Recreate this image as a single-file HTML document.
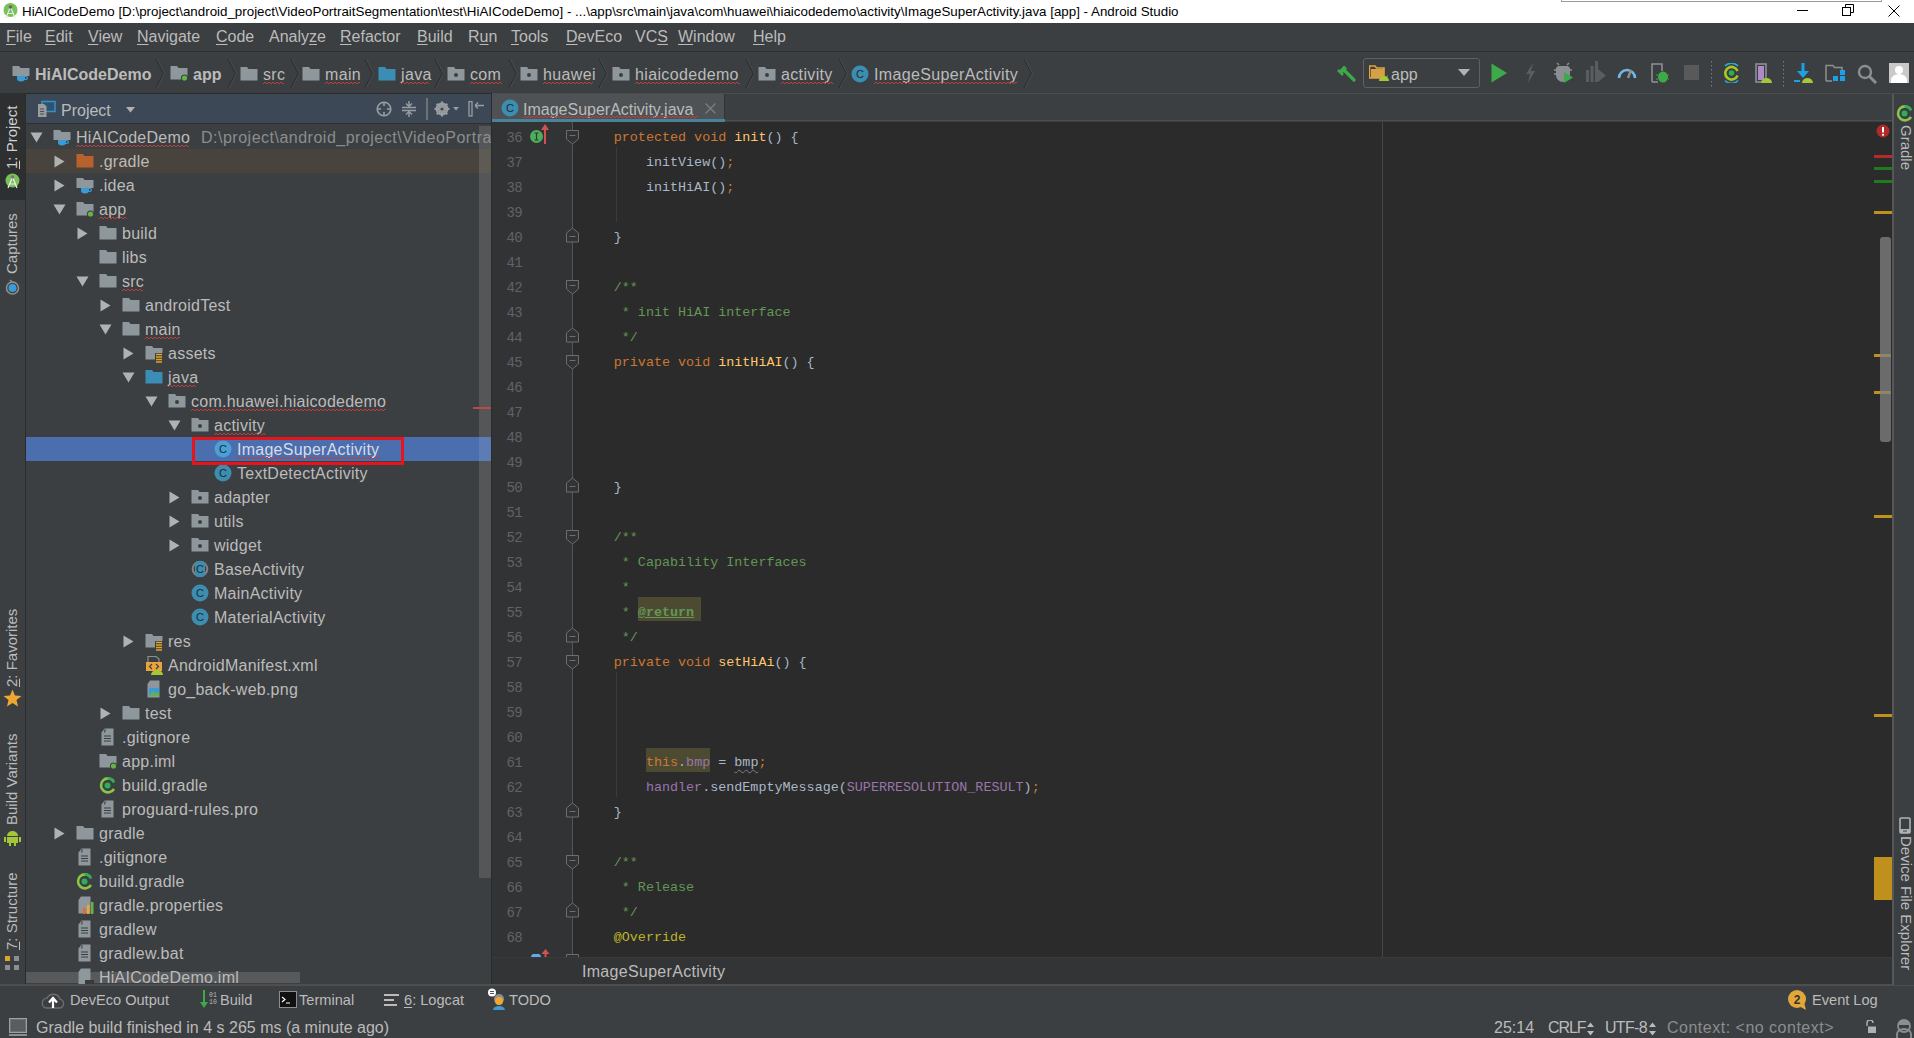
<!DOCTYPE html><html><head><meta charset="utf-8"><style>
*{margin:0;padding:0;box-sizing:border-box}
html,body{width:1914px;height:1038px;overflow:hidden;background:#3C3F41;font-family:"Liberation Sans", sans-serif}
div{position:absolute}
.t{white-space:pre;line-height:1}
.m{white-space:pre;line-height:1;font-family:"Liberation Mono", monospace}
u{text-decoration:underline;text-underline-offset:2px;text-decoration-thickness:1px}
</style></head><body>
<div style="left:0px;top:0px;width:1914px;height:23px;background:#FFFFFF;"></div>
<svg style="position:absolute;left:2px;top:2px;" width="17" height="17" viewBox="0 0 17 17"><circle cx="8.5" cy="8" r="7" fill="#78C257"/><path d="M8.5 4.5 L4 16 M8.5 4.5 L13 16 M5 11.5 H12" stroke="#E8E8E8" stroke-width="1.2" fill="none"/><circle cx="8.5" cy="5" r="1.8" fill="#666"/></svg>
<div class="t" style="left:22px;top:5px;font-size:13.35px;color:#000000;">HiAICodeDemo [D:\project\android_project\VideoPortraitSegmentation\test\HiAICodeDemo] - ...\app\src\main\java\com\huawei\hiaicodedemo\activity\ImageSuperActivity.java [app] - Android Studio</div>
<div style="left:1561px;top:0px;width:321px;height:2px;background:transparent;border:1px solid #9a9a9a;border-top:none"></div>
<div style="left:1797px;top:10px;width:11px;height:1px;background:#000;"></div>
<svg style="position:absolute;left:1841px;top:3px;" width="14" height="14" viewBox="0 0 14 14"><rect x="1.5" y="4.5" width="8" height="8" fill="none" stroke="#000"/><path d="M4.5 4.5 V1.5 H12.5 V9.5 H9.5" fill="none" stroke="#000"/></svg>
<svg style="position:absolute;left:1888px;top:5px;" width="12" height="12" viewBox="0 0 12 12"><path d="M0.5 0.5 L11.5 11.5 M11.5 0.5 L0.5 11.5" stroke="#000" stroke-width="1"/></svg>
<div style="left:0px;top:23px;width:1914px;height:29px;background:#3C3F41;"></div>
<div style="left:0px;top:51px;width:1914px;height:1px;background:#2E3032;"></div>
<div class="t" style="left:6px;top:29px;font-size:16px;color:#BBBBBB;"><u>F</u>ile</div>
<div class="t" style="left:45px;top:29px;font-size:16px;color:#BBBBBB;"><u>E</u>dit</div>
<div class="t" style="left:88px;top:29px;font-size:16px;color:#BBBBBB;"><u>V</u>iew</div>
<div class="t" style="left:137px;top:29px;font-size:16px;color:#BBBBBB;"><u>N</u>avigate</div>
<div class="t" style="left:216px;top:29px;font-size:16px;color:#BBBBBB;"><u>C</u>ode</div>
<div class="t" style="left:269px;top:29px;font-size:16px;color:#BBBBBB;">Analy<u>z</u>e</div>
<div class="t" style="left:340px;top:29px;font-size:16px;color:#BBBBBB;"><u>R</u>efactor</div>
<div class="t" style="left:417px;top:29px;font-size:16px;color:#BBBBBB;"><u>B</u>uild</div>
<div class="t" style="left:468px;top:29px;font-size:16px;color:#BBBBBB;">R<u>u</u>n</div>
<div class="t" style="left:511px;top:29px;font-size:16px;color:#BBBBBB;"><u>T</u>ools</div>
<div class="t" style="left:566px;top:29px;font-size:16px;color:#BBBBBB;"><u>D</u>evEco</div>
<div class="t" style="left:635px;top:29px;font-size:16px;color:#BBBBBB;">VC<u>S</u></div>
<div class="t" style="left:678px;top:29px;font-size:16px;color:#BBBBBB;"><u>W</u>indow</div>
<div class="t" style="left:753px;top:29px;font-size:16px;color:#BBBBBB;"><u>H</u>elp</div>
<div style="left:0px;top:52px;width:1914px;height:41px;background:#3C3F41;"></div>
<div style="left:0px;top:93px;width:492px;height:1px;background:#2B2B2B;"></div>
<div style="left:492px;top:93px;width:1422px;height:1px;background:#4A4C4E;"></div>
<svg style="position:absolute;left:12px;top:65px;" width="20" height="19" viewBox="0 0 20 19"><path d="M0.5 1 H7 L8.5 3 H17.5 V11 H0.5 Z" fill="#8E979C"/><path d="M5 11 h8 v2.5 a4 3 0 0 1 -8 0 Z" fill="#3A9BD6"/><path d="M12.5 11.5 h1.5 a1.4 1.4 0 0 1 0 2.8 h-1.5" stroke="#3A9BD6" stroke-width="1.2" fill="none"/></svg>
<div class="t" style="left:35px;top:67px;font-size:16px;color:#BBBBBB;font-weight:bold">HiAICodeDemo</div>
<svg style="position:absolute;left:155px;top:59px;" width="10" height="29" viewBox="0 0 10 29"><path d="M1 0 L8.5 14.5 L1 29" stroke="#2B2D2F" stroke-width="1.2" fill="none"/><path d="M2 0 L9.5 14.5 L2 29" stroke="#4F5254" stroke-width="0.8" fill="none"/></svg>
<svg style="position:absolute;left:170px;top:65px;" width="20" height="19" viewBox="0 0 20 19"><path d="M0.5 1 H7 L8.5 3 H17.5 V14.5 H0.5 Z" fill="#8E979C"/><circle cx="14.5" cy="13" r="3.6" fill="#3C3F41"/><circle cx="14.5" cy="13" r="2.6" fill="#62B543"/></svg>
<div class="t" style="left:193px;top:67px;font-size:16px;color:#BBBBBB;font-weight:bold">app</div>
<svg style="position:absolute;left:227px;top:59px;" width="10" height="29" viewBox="0 0 10 29"><path d="M1 0 L8.5 14.5 L1 29" stroke="#2B2D2F" stroke-width="1.2" fill="none"/><path d="M2 0 L9.5 14.5 L2 29" stroke="#4F5254" stroke-width="0.8" fill="none"/></svg>
<svg style="position:absolute;left:240px;top:66px;" width="20" height="19" viewBox="0 0 20 19"><path d="M0.5 1 H7 L8.5 3 H17.5 V14.5 H0.5 Z" fill="#8E979C"/></svg>
<div class="t" style="left:263px;top:67px;font-size:16px;color:#BBBBBB;letter-spacing:0.35px">src</div>
<svg style="position:absolute;left:263px;top:82px;" width="21" height="3" viewBox="0 0 21 3"><path d="M0 2 L2 0 L4 2 L6 0 L8 2 L10 0 L12 2 L14 0 L16 2 L18 0 L20 2 L22 0" stroke="#BC3F3C" stroke-width="1" fill="none"/></svg>
<svg style="position:absolute;left:290px;top:59px;" width="10" height="29" viewBox="0 0 10 29"><path d="M1 0 L8.5 14.5 L1 29" stroke="#2B2D2F" stroke-width="1.2" fill="none"/><path d="M2 0 L9.5 14.5 L2 29" stroke="#4F5254" stroke-width="0.8" fill="none"/></svg>
<svg style="position:absolute;left:302px;top:66px;" width="20" height="19" viewBox="0 0 20 19"><path d="M0.5 1 H7 L8.5 3 H17.5 V14.5 H0.5 Z" fill="#8E979C"/></svg>
<div class="t" style="left:325px;top:67px;font-size:16px;color:#BBBBBB;letter-spacing:0.35px">main</div>
<svg style="position:absolute;left:325px;top:82px;" width="35" height="3" viewBox="0 0 35 3"><path d="M0 2 L2 0 L4 2 L6 0 L8 2 L10 0 L12 2 L14 0 L16 2 L18 0 L20 2 L22 0 L24 2 L26 0 L28 2 L30 0 L32 2 L34 0 L36 2" stroke="#BC3F3C" stroke-width="1" fill="none"/></svg>
<svg style="position:absolute;left:364px;top:59px;" width="10" height="29" viewBox="0 0 10 29"><path d="M1 0 L8.5 14.5 L1 29" stroke="#2B2D2F" stroke-width="1.2" fill="none"/><path d="M2 0 L9.5 14.5 L2 29" stroke="#4F5254" stroke-width="0.8" fill="none"/></svg>
<svg style="position:absolute;left:378px;top:66px;" width="20" height="19" viewBox="0 0 20 19"><path d="M0.5 1 H7 L8.5 3 H17.5 V14.5 H0.5 Z" fill="#3C8DB5"/></svg>
<div class="t" style="left:401px;top:67px;font-size:16px;color:#BBBBBB;letter-spacing:0.35px">java</div>
<svg style="position:absolute;left:401px;top:82px;" width="28" height="3" viewBox="0 0 28 3"><path d="M0 2 L2 0 L4 2 L6 0 L8 2 L10 0 L12 2 L14 0 L16 2 L18 0 L20 2 L22 0 L24 2 L26 0 L28 2 L30 0" stroke="#BC3F3C" stroke-width="1" fill="none"/></svg>
<svg style="position:absolute;left:434px;top:59px;" width="10" height="29" viewBox="0 0 10 29"><path d="M1 0 L8.5 14.5 L1 29" stroke="#2B2D2F" stroke-width="1.2" fill="none"/><path d="M2 0 L9.5 14.5 L2 29" stroke="#4F5254" stroke-width="0.8" fill="none"/></svg>
<svg style="position:absolute;left:447px;top:66px;" width="20" height="19" viewBox="0 0 20 19"><path d="M0.5 1 H7 L8.5 3 H17.5 V14.5 H0.5 Z" fill="#8E979C"/><circle cx="9" cy="9" r="2" fill="#3C3F41"/></svg>
<div class="t" style="left:470px;top:67px;font-size:16px;color:#BBBBBB;letter-spacing:0.35px">com</div>
<svg style="position:absolute;left:470px;top:82px;" width="32" height="3" viewBox="0 0 32 3"><path d="M0 2 L2 0 L4 2 L6 0 L8 2 L10 0 L12 2 L14 0 L16 2 L18 0 L20 2 L22 0 L24 2 L26 0 L28 2 L30 0 L32 2 L34 0" stroke="#BC3F3C" stroke-width="1" fill="none"/></svg>
<svg style="position:absolute;left:508px;top:59px;" width="10" height="29" viewBox="0 0 10 29"><path d="M1 0 L8.5 14.5 L1 29" stroke="#2B2D2F" stroke-width="1.2" fill="none"/><path d="M2 0 L9.5 14.5 L2 29" stroke="#4F5254" stroke-width="0.8" fill="none"/></svg>
<svg style="position:absolute;left:520px;top:66px;" width="20" height="19" viewBox="0 0 20 19"><path d="M0.5 1 H7 L8.5 3 H17.5 V14.5 H0.5 Z" fill="#8E979C"/><circle cx="9" cy="9" r="2" fill="#3C3F41"/></svg>
<div class="t" style="left:543px;top:67px;font-size:16px;color:#BBBBBB;letter-spacing:0.35px">huawei</div>
<svg style="position:absolute;left:543px;top:82px;" width="50" height="3" viewBox="0 0 50 3"><path d="M0 2 L2 0 L4 2 L6 0 L8 2 L10 0 L12 2 L14 0 L16 2 L18 0 L20 2 L22 0 L24 2 L26 0 L28 2 L30 0 L32 2 L34 0 L36 2 L38 0 L40 2 L42 0 L44 2 L46 0 L48 2 L50 0 L52 2" stroke="#BC3F3C" stroke-width="1" fill="none"/></svg>
<svg style="position:absolute;left:598px;top:59px;" width="10" height="29" viewBox="0 0 10 29"><path d="M1 0 L8.5 14.5 L1 29" stroke="#2B2D2F" stroke-width="1.2" fill="none"/><path d="M2 0 L9.5 14.5 L2 29" stroke="#4F5254" stroke-width="0.8" fill="none"/></svg>
<svg style="position:absolute;left:612px;top:66px;" width="20" height="19" viewBox="0 0 20 19"><path d="M0.5 1 H7 L8.5 3 H17.5 V14.5 H0.5 Z" fill="#8E979C"/><circle cx="9" cy="9" r="2" fill="#3C3F41"/></svg>
<div class="t" style="left:635px;top:67px;font-size:16px;color:#BBBBBB;letter-spacing:0.35px">hiaicodedemo</div>
<svg style="position:absolute;left:635px;top:82px;" width="105" height="3" viewBox="0 0 105 3"><path d="M0 2 L2 0 L4 2 L6 0 L8 2 L10 0 L12 2 L14 0 L16 2 L18 0 L20 2 L22 0 L24 2 L26 0 L28 2 L30 0 L32 2 L34 0 L36 2 L38 0 L40 2 L42 0 L44 2 L46 0 L48 2 L50 0 L52 2 L54 0 L56 2 L58 0 L60 2 L62 0 L64 2 L66 0 L68 2 L70 0 L72 2 L74 0 L76 2 L78 0 L80 2 L82 0 L84 2 L86 0 L88 2 L90 0 L92 2 L94 0 L96 2 L98 0 L100 2 L102 0 L104 2 L106 0" stroke="#BC3F3C" stroke-width="1" fill="none"/></svg>
<svg style="position:absolute;left:745px;top:59px;" width="10" height="29" viewBox="0 0 10 29"><path d="M1 0 L8.5 14.5 L1 29" stroke="#2B2D2F" stroke-width="1.2" fill="none"/><path d="M2 0 L9.5 14.5 L2 29" stroke="#4F5254" stroke-width="0.8" fill="none"/></svg>
<svg style="position:absolute;left:758px;top:66px;" width="20" height="19" viewBox="0 0 20 19"><path d="M0.5 1 H7 L8.5 3 H17.5 V14.5 H0.5 Z" fill="#8E979C"/><circle cx="9" cy="9" r="2" fill="#3C3F41"/></svg>
<div class="t" style="left:781px;top:67px;font-size:16px;color:#BBBBBB;letter-spacing:0.35px">activity</div>
<svg style="position:absolute;left:781px;top:82px;" width="52" height="3" viewBox="0 0 52 3"><path d="M0 2 L2 0 L4 2 L6 0 L8 2 L10 0 L12 2 L14 0 L16 2 L18 0 L20 2 L22 0 L24 2 L26 0 L28 2 L30 0 L32 2 L34 0 L36 2 L38 0 L40 2 L42 0 L44 2 L46 0 L48 2 L50 0 L52 2 L54 0" stroke="#BC3F3C" stroke-width="1" fill="none"/></svg>
<svg style="position:absolute;left:838px;top:59px;" width="10" height="29" viewBox="0 0 10 29"><path d="M1 0 L8.5 14.5 L1 29" stroke="#2B2D2F" stroke-width="1.2" fill="none"/><path d="M2 0 L9.5 14.5 L2 29" stroke="#4F5254" stroke-width="0.8" fill="none"/></svg>
<svg style="position:absolute;left:851px;top:65px;" width="18" height="18" viewBox="0 0 18 18"><circle cx="9" cy="9" r="8.5" fill="#3D8DB0"/><text x="9" y="13" text-anchor="middle" font-family="Liberation Sans" font-size="11" fill="#1D2B33">C</text></svg>
<div class="t" style="left:874px;top:67px;font-size:16px;color:#BBBBBB;letter-spacing:0.35px">ImageSuperActivity</div>
<svg style="position:absolute;left:874px;top:82px;" width="143" height="3" viewBox="0 0 143 3"><path d="M0 2 L2 0 L4 2 L6 0 L8 2 L10 0 L12 2 L14 0 L16 2 L18 0 L20 2 L22 0 L24 2 L26 0 L28 2 L30 0 L32 2 L34 0 L36 2 L38 0 L40 2 L42 0 L44 2 L46 0 L48 2 L50 0 L52 2 L54 0 L56 2 L58 0 L60 2 L62 0 L64 2 L66 0 L68 2 L70 0 L72 2 L74 0 L76 2 L78 0 L80 2 L82 0 L84 2 L86 0 L88 2 L90 0 L92 2 L94 0 L96 2 L98 0 L100 2 L102 0 L104 2 L106 0 L108 2 L110 0 L112 2 L114 0 L116 2 L118 0 L120 2 L122 0 L124 2 L126 0 L128 2 L130 0 L132 2 L134 0 L136 2 L138 0 L140 2 L142 0 L144 2" stroke="#BC3F3C" stroke-width="1" fill="none"/></svg>
<svg style="position:absolute;left:1023px;top:59px;" width="10" height="29" viewBox="0 0 10 29"><path d="M1 0 L8.5 14.5 L1 29" stroke="#2B2D2F" stroke-width="1.2" fill="none"/><path d="M2 0 L9.5 14.5 L2 29" stroke="#4F5254" stroke-width="0.8" fill="none"/></svg>
<svg style="position:absolute;left:1336px;top:63px;" width="20" height="20" viewBox="0 0 20 20"><path d="M3 8 L8 2.5 L11 5.5 L6 11 Z" fill="#3DAA4A"/><path d="M8 7 L18 17" stroke="#3DAA4A" stroke-width="3.2" stroke-linecap="round"/><path d="M2 7 L7 12" stroke="#3DAA4A" stroke-width="2.5"/></svg>
<div style="left:1363px;top:58px;width:117px;height:30px;background:#3C3F41;border:1px solid #5E6062;border-radius:3px"></div>
<svg style="position:absolute;left:1369px;top:65px;" width="22" height="17" viewBox="0 0 22 17"><path d="M0.5 1 H6 L7.5 3 H15 V13 H0.5 Z" fill="none" stroke="#E3A53E" stroke-width="1.6"/><path d="M2 4 H15 V13 H2Z" fill="#D7A047"/><path d="M10 16 a5 5 0 0 1 10 0 Z" fill="#A4C639"/><path d="M11.5 10.5 L12.5 12 M18.5 10.5 L17.5 12" stroke="#A4C639"/></svg>
<div class="t" style="left:1391px;top:67px;font-size:16px;color:#BBBBBB;">app</div>
<svg style="position:absolute;left:1458px;top:69px;" width="13" height="8" viewBox="0 0 13 8"><path d="M0 0 H12 L6 7Z" fill="#AFB1B3"/></svg>
<svg style="position:absolute;left:1491px;top:63px;" width="17" height="20" viewBox="0 0 17 20"><path d="M0.5 0.5 L16 10 L0.5 19.5Z" fill="#3DAA4A"/></svg>
<svg style="position:absolute;left:1524px;top:63px;" width="13" height="20" viewBox="0 0 13 20"><path d="M9 0 L2 11 H6 L4 20 L11 8 H7 Z" fill="#5A5D5F"/></svg>
<svg style="position:absolute;left:1554px;top:62px;" width="20" height="21" viewBox="0 0 20 21"><path d="M4 4 h10 l2 2 v7 a7 7 0 0 1 -14 0 v-7 Z" fill="#8C8F91"/><path d="M2 8 h-2 M2 12 h-2 M16 8 h2 M5 3 l-2 -2 M13 3 l2 -2" stroke="#8C8F91" stroke-width="1.5"/><path d="M10 10 L19 15.5 L10 21Z" fill="#3DAA4A"/></svg>
<svg style="position:absolute;left:1586px;top:61px;" width="20" height="22" viewBox="0 0 20 22"><rect x="0" y="9" width="3" height="12" fill="#5A5D5F"/><rect x="4.5" y="5" width="3" height="16" fill="#5A5D5F"/><rect x="9" y="0" width="3" height="21" fill="#5A5D5F"/><path d="M12 8 L20 14.5 L12 21Z" fill="#5A5D5F"/></svg>
<svg style="position:absolute;left:1617px;top:64px;" width="20" height="16" viewBox="0 0 20 16"><path d="M2 14 A8 8 0 0 1 18 14" stroke="#6FB8E8" stroke-width="2.6" fill="none"/><path d="M11 14 L14 6" stroke="#8C8F91" stroke-width="2.4"/></svg>
<svg style="position:absolute;left:1651px;top:63px;" width="18" height="20" viewBox="0 0 18 20"><path d="M1 19 V1 H11 V8" stroke="#8C8F91" stroke-width="1.6" fill="none"/><path d="M1 19 H7" stroke="#8C8F91" stroke-width="1.6"/><ellipse cx="12" cy="14" rx="5" ry="5.5" fill="#3DAA4A"/><path d="M7 12 h-2 M17 12 h2 M7 16 h-2 M17 16 h2" stroke="#3DAA4A"/></svg>
<div style="left:1684px;top:65px;width:15px;height:15px;background:#595959;"></div>
<svg style="position:absolute;left:1710px;top:61px;" width="3" height="26" viewBox="0 0 3 26"><path d="M1.5 0 V26" stroke="#7A7D7F" stroke-dasharray="1.5 2.5"/></svg>
<svg style="position:absolute;left:1722px;top:63px;" width="19" height="20" viewBox="0 0 19 20"><path d="M3 3 A9 9 0 0 1 16 3" stroke="#28A8E0" stroke-width="1.6" fill="none"/><path d="M3 17.5 A9 9 0 0 0 16 17.5" stroke="#28A8E0" stroke-width="1.6" fill="none"/><path d="M15.5 8 A6.3 6.3 0 1 0 15.5 12.5" stroke="#A5C920" stroke-width="2.6" fill="none"/><circle cx="9.5" cy="10" r="2.7" fill="#2FAE58"/></svg>
<svg style="position:absolute;left:1755px;top:63px;" width="17" height="20" viewBox="0 0 17 20"><rect x="1" y="1" width="10" height="18" fill="none" stroke="#8C8F91" stroke-width="1.6"/><rect x="3" y="3" width="6" height="14" fill="#B08AC8"/><path d="M6 20 a5.5 5 0 0 1 11 0 Z" fill="#A4C639"/></svg>
<svg style="position:absolute;left:1782px;top:61px;" width="3" height="26" viewBox="0 0 3 26"><path d="M1.5 0 V26" stroke="#7A7D7F" stroke-dasharray="1.5 2.5"/></svg>
<svg style="position:absolute;left:1794px;top:63px;" width="19" height="20" viewBox="0 0 19 20"><path d="M9 0 V12" stroke="#1E9FE6" stroke-width="3"/><path d="M3 8 L9 15 L15 8Z" fill="#1E9FE6"/><rect x="0" y="17" width="6" height="2" fill="#1E9FE6"/><path d="M8 20 a5.5 5 0 0 1 11 0 Z" fill="#A4C639"/></svg>
<svg style="position:absolute;left:1825px;top:64px;" width="21" height="18" viewBox="0 0 21 18"><path d="M1 17 V1.5 H8 L9.5 3.5 H17 V6" stroke="#8C8F91" stroke-width="1.5" fill="none"/><path d="M1 17 H7" stroke="#8C8F91" stroke-width="1.5"/><rect x="15" y="6" width="5" height="5" fill="#1E9FE6"/><rect x="8" y="12" width="5" height="5" fill="#1E9FE6"/><rect x="15" y="12" width="5" height="5" fill="#1E9FE6"/></svg>
<svg style="position:absolute;left:1857px;top:64px;" width="21" height="20" viewBox="0 0 21 20"><circle cx="8" cy="8" r="6" stroke="#8C8F91" stroke-width="2.4" fill="none"/><path d="M12.5 12.5 L19 19" stroke="#8C8F91" stroke-width="3"/></svg>
<svg style="position:absolute;left:1889px;top:63px;" width="20" height="20" viewBox="0 0 20 20"><rect width="20" height="20" fill="#C9C9C9"/><circle cx="10" cy="7" r="4" fill="#FFF"/><path d="M2 20 V17 a8 6 0 0 1 16 0 V20Z" fill="#FFF"/></svg>
<div style="left:0px;top:94px;width:25px;height:891px;background:#3C3F41;"></div>
<div style="left:0px;top:93px;width:25px;height:107px;background:#2D2F30;"></div>
<div style="left:25px;top:94px;width:1px;height:891px;background:#2B2B2B;"></div>
<div class="t" style="left:4px;top:169px;font-size:15px;color:#D0D0D0;transform-origin:0 0;transform:rotate(-90deg)"><u>1</u>: Project</div>
<div class="t" style="left:4px;top:274px;font-size:15px;color:#BBBBBB;transform-origin:0 0;transform:rotate(-90deg)">Captures</div>
<div class="t" style="left:4px;top:687px;font-size:15px;color:#BBBBBB;transform-origin:0 0;transform:rotate(-90deg)"><u>2</u>: Favorites</div>
<div class="t" style="left:4px;top:825px;font-size:15px;color:#BBBBBB;transform-origin:0 0;transform:rotate(-90deg)">Build Variants</div>
<div class="t" style="left:4px;top:950px;font-size:15px;color:#BBBBBB;transform-origin:0 0;transform:rotate(-90deg)"><u>7</u>: Structure</div>
<svg style="position:absolute;left:4px;top:172px;" width="17" height="17" viewBox="0 0 17 17"><circle cx="8.5" cy="8.5" r="7" fill="#78C257"/><path d="M8.5 5 L4 16 M8.5 5 L13 16 M5 12 H12" stroke="#F0F0F0" stroke-width="1.2" fill="none"/><circle cx="8.5" cy="5" r="1.8" fill="#777"/></svg>
<svg style="position:absolute;left:4px;top:278px;" width="17" height="17" viewBox="0 0 17 17"><circle cx="8.5" cy="10" r="6" fill="none" stroke="#8C8F91" stroke-width="1.6"/><circle cx="8.5" cy="10" r="4" fill="#3A9BD6"/><path d="M6 2 L9 5" stroke="#8C8F91" stroke-width="1.5"/></svg>
<svg style="position:absolute;left:3px;top:689px;" width="19" height="18" viewBox="0 0 19 18"><path d="M9.5 0.5 L12 6.5 L18.5 7 L13.5 11 L15 17.5 L9.5 14 L4 17.5 L5.5 11 L0.5 7 L7 6.5Z" fill="#F0A732"/></svg>
<svg style="position:absolute;left:4px;top:829px;" width="17" height="17" viewBox="0 0 17 17"><path d="M3 7 a5.5 5 0 0 1 11 0 Z" fill="#A4C639"/><rect x="3" y="8" width="11" height="6" fill="#A4C639"/><rect x="0" y="8" width="2" height="5" fill="#A4C639"/><rect x="15" y="8" width="2" height="5" fill="#A4C639"/><rect x="5" y="14" width="2" height="3" fill="#A4C639"/><rect x="10" y="14" width="2" height="3" fill="#A4C639"/></svg>
<svg style="position:absolute;left:4px;top:955px;" width="17" height="16" viewBox="0 0 17 16"><rect x="1" y="1" width="5" height="5" fill="#E0A526"/><rect x="10" y="1" width="5" height="5" fill="#8C8F91"/><rect x="1" y="10" width="5" height="5" fill="#8C8F91"/><rect x="10" y="10" width="5" height="5" fill="#8C8F91"/></svg>
<div style="left:26px;top:94px;width:465px;height:30px;background:#3D4857;"></div>
<div style="left:26px;top:123px;width:465px;height:1px;background:#2E3033;"></div>
<svg style="position:absolute;left:37px;top:100px;" width="20" height="18" viewBox="0 0 20 18"><rect x="5" y="1.5" width="13" height="10" fill="#2C5472" stroke="#3A8FC0" stroke-width="1.5"/><path d="M1 4 H7 L9.5 6.5 V17 H1Z" fill="#9A9C9E"/><path d="M3 9 h4 M3 11.5 h4 M3 14 h4" stroke="#4A4C4E" stroke-width="1.2"/></svg>
<div class="t" style="left:61px;top:103px;font-size:16px;color:#BBBBBB;">Project</div>
<svg style="position:absolute;left:126px;top:107px;" width="10" height="6" viewBox="0 0 10 6"><path d="M0 0 H9 L4.5 5.5Z" fill="#AFB1B3"/></svg>
<svg style="position:absolute;left:376px;top:101px;" width="17" height="17" viewBox="0 0 17 17"><circle cx="8" cy="8" r="6.8" stroke="#9A9DA0" stroke-width="1.6" fill="none"/><path d="M8 1 V5 M8 11 V15 M1 8 H5 M11 8 H15" stroke="#9A9DA0" stroke-width="1.6"/></svg>
<svg style="position:absolute;left:401px;top:101px;" width="16" height="17" viewBox="0 0 16 17"><path d="M1 6.5 H15 M1 9.5 H15" stroke="#9A9DA0" stroke-width="1.3"/><path d="M8 0 V5 M5 2.5 L8 5.5 L11 2.5 M8 16 V11 M5 13.5 L8 10.5 L11 13.5" stroke="#9A9DA0" stroke-width="1.4" fill="none"/></svg>
<div style="left:426px;top:98px;width:2px;height:22px;background:#6E7275;"></div>
<svg style="position:absolute;left:434px;top:101px;" width="26" height="17" viewBox="0 0 26 17"><circle cx="8" cy="8" r="5" fill="none" stroke="#9A9DA0" stroke-width="3"/><path d="M8 0.5 V15.5 M0.5 8 H15.5 M2.7 2.7 L13.3 13.3 M13.3 2.7 L2.7 13.3" stroke="#9A9DA0" stroke-width="2.2"/><circle cx="8" cy="8" r="1.6" fill="#3D4756"/><path d="M19 6 H25 L22 9.5Z" fill="#9A9DA0"/></svg>
<svg style="position:absolute;left:468px;top:101px;" width="17" height="16" viewBox="0 0 17 16"><rect x="1" y="0.5" width="3" height="14.5" fill="none" stroke="#9A9DA0" stroke-width="1.3"/><path d="M7 4.5 H16 M7 4.5 L10 1.5 M7 4.5 L10 7.5" stroke="#9A9DA0" stroke-width="1.3" fill="none"/></svg>
<div style="left:26px;top:124px;width:465px;height:861px;background:#3C3F41;"></div>
<div style="left:26px;top:149px;width:453px;height:24px;background:#48443D;"></div>
<div style="left:26px;top:437px;width:453px;height:24px;background:#4B6EAF;"></div>
<div style="left:26px;top:972px;width:274px;height:11px;background:#57595B;"></div>
<div style="left:479px;top:124px;width:12px;height:861px;background:#3C3F41;"></div>
<div style="left:479px;top:126px;width:12px;height:752px;background:#545658;"></div>
<div style="left:479px;top:437px;width:12px;height:24px;background:#5D7BB5;"></div>
<div style="left:479px;top:149px;width:12px;height:24px;background:#5E5B55;"></div>
<svg style="position:absolute;left:30px;top:132px;" width="13" height="11" viewBox="0 0 13 11"><path d="M0.5 0.5 H12.5 L6.5 10.5Z" fill="#AFB1B3"/></svg>
<svg style="position:absolute;left:53px;top:129px;" width="20" height="19" viewBox="0 0 20 19"><path d="M0.5 1 H7 L8.5 3 H17.5 V11 H0.5 Z" fill="#8E979C"/><path d="M5 11 h8 v2.5 a4 3 0 0 1 -8 0 Z" fill="#3A9BD6"/><path d="M12.5 11.5 h1.5 a1.4 1.4 0 0 1 0 2.8 h-1.5" stroke="#3A9BD6" stroke-width="1.2" fill="none"/></svg>
<div class="t" style="left:76px;top:130px;font-size:16px;color:#BBBBBB;letter-spacing:0.25px"><span>HiAICodeDemo</span></div>
<svg style="position:absolute;left:76px;top:145px;" width="113" height="3" viewBox="0 0 113 3"><path d="M0 2 L2 0 L4 2 L6 0 L8 2 L10 0 L12 2 L14 0 L16 2 L18 0 L20 2 L22 0 L24 2 L26 0 L28 2 L30 0 L32 2 L34 0 L36 2 L38 0 L40 2 L42 0 L44 2 L46 0 L48 2 L50 0 L52 2 L54 0 L56 2 L58 0 L60 2 L62 0 L64 2 L66 0 L68 2 L70 0 L72 2 L74 0 L76 2 L78 0 L80 2 L82 0 L84 2 L86 0 L88 2 L90 0 L92 2 L94 0 L96 2 L98 0 L100 2 L102 0 L104 2 L106 0 L108 2 L110 0 L112 2 L114 0" stroke="#BC3F3C" stroke-width="1" fill="none"/></svg>
<svg style="position:absolute;left:54px;top:155px;" width="11" height="13" viewBox="0 0 11 13"><path d="M0.5 0.5 L10.5 6.5 L0.5 12.5Z" fill="#AFB1B3"/></svg>
<svg style="position:absolute;left:76px;top:153px;" width="20" height="19" viewBox="0 0 20 19"><path d="M0.5 1 H7 L8.5 3 H17.5 V14.5 H0.5 Z" fill="#B6612E"/></svg>
<div class="t" style="left:99px;top:154px;font-size:16px;color:#BBBBBB;letter-spacing:0.25px">.gradle</div>
<svg style="position:absolute;left:54px;top:179px;" width="11" height="13" viewBox="0 0 11 13"><path d="M0.5 0.5 L10.5 6.5 L0.5 12.5Z" fill="#AFB1B3"/></svg>
<svg style="position:absolute;left:76px;top:177px;" width="20" height="19" viewBox="0 0 20 19"><path d="M0.5 1 H7 L8.5 3 H17.5 V11 H0.5 Z" fill="#8E979C"/><path d="M5 11 h8 v2.5 a4 3 0 0 1 -8 0 Z" fill="#3A9BD6"/><path d="M12.5 11.5 h1.5 a1.4 1.4 0 0 1 0 2.8 h-1.5" stroke="#3A9BD6" stroke-width="1.2" fill="none"/></svg>
<div class="t" style="left:99px;top:178px;font-size:16px;color:#BBBBBB;letter-spacing:0.25px">.idea</div>
<svg style="position:absolute;left:53px;top:204px;" width="13" height="11" viewBox="0 0 13 11"><path d="M0.5 0.5 H12.5 L6.5 10.5Z" fill="#AFB1B3"/></svg>
<svg style="position:absolute;left:76px;top:201px;" width="20" height="19" viewBox="0 0 20 19"><path d="M0.5 1 H7 L8.5 3 H17.5 V14.5 H0.5 Z" fill="#8E979C"/><circle cx="14.5" cy="13" r="3.6" fill="#3C3F41"/><circle cx="14.5" cy="13" r="2.6" fill="#62B543"/></svg>
<div class="t" style="left:99px;top:202px;font-size:16px;color:#BBBBBB;letter-spacing:0.25px">app</div>
<svg style="position:absolute;left:99px;top:217px;" width="28" height="3" viewBox="0 0 28 3"><path d="M0 2 L2 0 L4 2 L6 0 L8 2 L10 0 L12 2 L14 0 L16 2 L18 0 L20 2 L22 0 L24 2 L26 0 L28 2 L30 0" stroke="#BC3F3C" stroke-width="1" fill="none"/></svg>
<svg style="position:absolute;left:77px;top:227px;" width="11" height="13" viewBox="0 0 11 13"><path d="M0.5 0.5 L10.5 6.5 L0.5 12.5Z" fill="#AFB1B3"/></svg>
<svg style="position:absolute;left:99px;top:225px;" width="20" height="19" viewBox="0 0 20 19"><path d="M0.5 1 H7 L8.5 3 H17.5 V14.5 H0.5 Z" fill="#8E979C"/></svg>
<div class="t" style="left:122px;top:226px;font-size:16px;color:#BBBBBB;letter-spacing:0.25px">build</div>
<svg style="position:absolute;left:99px;top:249px;" width="20" height="19" viewBox="0 0 20 19"><path d="M0.5 1 H7 L8.5 3 H17.5 V14.5 H0.5 Z" fill="#8E979C"/></svg>
<div class="t" style="left:122px;top:250px;font-size:16px;color:#BBBBBB;letter-spacing:0.25px">libs</div>
<svg style="position:absolute;left:76px;top:276px;" width="13" height="11" viewBox="0 0 13 11"><path d="M0.5 0.5 H12.5 L6.5 10.5Z" fill="#AFB1B3"/></svg>
<svg style="position:absolute;left:99px;top:273px;" width="20" height="19" viewBox="0 0 20 19"><path d="M0.5 1 H7 L8.5 3 H17.5 V14.5 H0.5 Z" fill="#8E979C"/></svg>
<div class="t" style="left:122px;top:274px;font-size:16px;color:#BBBBBB;letter-spacing:0.25px">src</div>
<svg style="position:absolute;left:122px;top:289px;" width="21" height="3" viewBox="0 0 21 3"><path d="M0 2 L2 0 L4 2 L6 0 L8 2 L10 0 L12 2 L14 0 L16 2 L18 0 L20 2 L22 0" stroke="#BC3F3C" stroke-width="1" fill="none"/></svg>
<svg style="position:absolute;left:100px;top:299px;" width="11" height="13" viewBox="0 0 11 13"><path d="M0.5 0.5 L10.5 6.5 L0.5 12.5Z" fill="#AFB1B3"/></svg>
<svg style="position:absolute;left:122px;top:297px;" width="20" height="19" viewBox="0 0 20 19"><path d="M0.5 1 H7 L8.5 3 H17.5 V14.5 H0.5 Z" fill="#8E979C"/></svg>
<div class="t" style="left:145px;top:298px;font-size:16px;color:#BBBBBB;letter-spacing:0.25px">androidTest</div>
<svg style="position:absolute;left:99px;top:324px;" width="13" height="11" viewBox="0 0 13 11"><path d="M0.5 0.5 H12.5 L6.5 10.5Z" fill="#AFB1B3"/></svg>
<svg style="position:absolute;left:122px;top:321px;" width="20" height="19" viewBox="0 0 20 19"><path d="M0.5 1 H7 L8.5 3 H17.5 V14.5 H0.5 Z" fill="#8E979C"/></svg>
<div class="t" style="left:145px;top:322px;font-size:16px;color:#BBBBBB;letter-spacing:0.25px">main</div>
<svg style="position:absolute;left:145px;top:337px;" width="35" height="3" viewBox="0 0 35 3"><path d="M0 2 L2 0 L4 2 L6 0 L8 2 L10 0 L12 2 L14 0 L16 2 L18 0 L20 2 L22 0 L24 2 L26 0 L28 2 L30 0 L32 2 L34 0 L36 2" stroke="#BC3F3C" stroke-width="1" fill="none"/></svg>
<svg style="position:absolute;left:123px;top:347px;" width="11" height="13" viewBox="0 0 11 13"><path d="M0.5 0.5 L10.5 6.5 L0.5 12.5Z" fill="#AFB1B3"/></svg>
<svg style="position:absolute;left:145px;top:345px;" width="20" height="19" viewBox="0 0 20 19"><path d="M0.5 1 H7 L8.5 3 H17.5 V14.5 H0.5 Z" fill="#8E979C"/><rect x="10" y="8" width="8" height="9" fill="#3C3F41"/><path d="M11 9.5 h6 M11 12 h6 M11 14.5 h6 M11 17 h6" stroke="#E0A526" stroke-width="1.3"/></svg>
<div class="t" style="left:168px;top:346px;font-size:16px;color:#BBBBBB;letter-spacing:0.25px">assets</div>
<svg style="position:absolute;left:122px;top:372px;" width="13" height="11" viewBox="0 0 13 11"><path d="M0.5 0.5 H12.5 L6.5 10.5Z" fill="#AFB1B3"/></svg>
<svg style="position:absolute;left:145px;top:369px;" width="20" height="19" viewBox="0 0 20 19"><path d="M0.5 1 H7 L8.5 3 H17.5 V14.5 H0.5 Z" fill="#3C8DB5"/></svg>
<div class="t" style="left:168px;top:370px;font-size:16px;color:#BBBBBB;letter-spacing:0.25px">java</div>
<svg style="position:absolute;left:168px;top:385px;" width="28" height="3" viewBox="0 0 28 3"><path d="M0 2 L2 0 L4 2 L6 0 L8 2 L10 0 L12 2 L14 0 L16 2 L18 0 L20 2 L22 0 L24 2 L26 0 L28 2 L30 0" stroke="#BC3F3C" stroke-width="1" fill="none"/></svg>
<svg style="position:absolute;left:145px;top:396px;" width="13" height="11" viewBox="0 0 13 11"><path d="M0.5 0.5 H12.5 L6.5 10.5Z" fill="#AFB1B3"/></svg>
<svg style="position:absolute;left:168px;top:393px;" width="20" height="19" viewBox="0 0 20 19"><path d="M0.5 1 H7 L8.5 3 H17.5 V14.5 H0.5 Z" fill="#8E979C"/><circle cx="9" cy="9" r="2" fill="#3C3F41"/></svg>
<div class="t" style="left:191px;top:394px;font-size:16px;color:#BBBBBB;letter-spacing:0.25px">com.huawei.hiaicodedemo</div>
<svg style="position:absolute;left:191px;top:409px;" width="195" height="3" viewBox="0 0 195 3"><path d="M0 2 L2 0 L4 2 L6 0 L8 2 L10 0 L12 2 L14 0 L16 2 L18 0 L20 2 L22 0 L24 2 L26 0 L28 2 L30 0 L32 2 L34 0 L36 2 L38 0 L40 2 L42 0 L44 2 L46 0 L48 2 L50 0 L52 2 L54 0 L56 2 L58 0 L60 2 L62 0 L64 2 L66 0 L68 2 L70 0 L72 2 L74 0 L76 2 L78 0 L80 2 L82 0 L84 2 L86 0 L88 2 L90 0 L92 2 L94 0 L96 2 L98 0 L100 2 L102 0 L104 2 L106 0 L108 2 L110 0 L112 2 L114 0 L116 2 L118 0 L120 2 L122 0 L124 2 L126 0 L128 2 L130 0 L132 2 L134 0 L136 2 L138 0 L140 2 L142 0 L144 2 L146 0 L148 2 L150 0 L152 2 L154 0 L156 2 L158 0 L160 2 L162 0 L164 2 L166 0 L168 2 L170 0 L172 2 L174 0 L176 2 L178 0 L180 2 L182 0 L184 2 L186 0 L188 2 L190 0 L192 2 L194 0 L196 2" stroke="#BC3F3C" stroke-width="1" fill="none"/></svg>
<svg style="position:absolute;left:168px;top:420px;" width="13" height="11" viewBox="0 0 13 11"><path d="M0.5 0.5 H12.5 L6.5 10.5Z" fill="#AFB1B3"/></svg>
<svg style="position:absolute;left:191px;top:417px;" width="20" height="19" viewBox="0 0 20 19"><path d="M0.5 1 H7 L8.5 3 H17.5 V14.5 H0.5 Z" fill="#8E979C"/><circle cx="9" cy="9" r="2" fill="#3C3F41"/></svg>
<div class="t" style="left:214px;top:418px;font-size:16px;color:#BBBBBB;letter-spacing:0.25px">activity</div>
<svg style="position:absolute;left:214px;top:433px;" width="52" height="3" viewBox="0 0 52 3"><path d="M0 2 L2 0 L4 2 L6 0 L8 2 L10 0 L12 2 L14 0 L16 2 L18 0 L20 2 L22 0 L24 2 L26 0 L28 2 L30 0 L32 2 L34 0 L36 2 L38 0 L40 2 L42 0 L44 2 L46 0 L48 2 L50 0 L52 2 L54 0" stroke="#BC3F3C" stroke-width="1" fill="none"/></svg>
<svg style="position:absolute;left:214px;top:440px;" width="18" height="18" viewBox="0 0 18 18"><circle cx="9" cy="9" r="8.5" fill="#4A9FD4"/><text x="9" y="13" text-anchor="middle" font-family="Liberation Sans" font-size="11" fill="#1D2B33">C</text></svg>
<div class="t" style="left:237px;top:442px;font-size:16px;color:#D8DCE6;letter-spacing:0.25px">ImageSuperActivity</div>
<svg style="position:absolute;left:237px;top:457px;" width="143" height="3" viewBox="0 0 143 3"><path d="M0 2 L2 0 L4 2 L6 0 L8 2 L10 0 L12 2 L14 0 L16 2 L18 0 L20 2 L22 0 L24 2 L26 0 L28 2 L30 0 L32 2 L34 0 L36 2 L38 0 L40 2 L42 0 L44 2 L46 0 L48 2 L50 0 L52 2 L54 0 L56 2 L58 0 L60 2 L62 0 L64 2 L66 0 L68 2 L70 0 L72 2 L74 0 L76 2 L78 0 L80 2 L82 0 L84 2 L86 0 L88 2 L90 0 L92 2 L94 0 L96 2 L98 0 L100 2 L102 0 L104 2 L106 0 L108 2 L110 0 L112 2 L114 0 L116 2 L118 0 L120 2 L122 0 L124 2 L126 0 L128 2 L130 0 L132 2 L134 0 L136 2 L138 0 L140 2 L142 0 L144 2" stroke="#BC3F3C" stroke-width="1" fill="none"/></svg>
<svg style="position:absolute;left:214px;top:464px;" width="18" height="18" viewBox="0 0 18 18"><circle cx="9" cy="9" r="8.5" fill="#3D8DB0"/><text x="9" y="13" text-anchor="middle" font-family="Liberation Sans" font-size="11" fill="#1D2B33">C</text></svg>
<div class="t" style="left:237px;top:466px;font-size:16px;color:#BBBBBB;letter-spacing:0.25px">TextDetectActivity</div>
<svg style="position:absolute;left:169px;top:491px;" width="11" height="13" viewBox="0 0 11 13"><path d="M0.5 0.5 L10.5 6.5 L0.5 12.5Z" fill="#AFB1B3"/></svg>
<svg style="position:absolute;left:191px;top:489px;" width="20" height="19" viewBox="0 0 20 19"><path d="M0.5 1 H7 L8.5 3 H17.5 V14.5 H0.5 Z" fill="#8E979C"/><circle cx="9" cy="9" r="2" fill="#3C3F41"/></svg>
<div class="t" style="left:214px;top:490px;font-size:16px;color:#BBBBBB;letter-spacing:0.25px">adapter</div>
<svg style="position:absolute;left:169px;top:515px;" width="11" height="13" viewBox="0 0 11 13"><path d="M0.5 0.5 L10.5 6.5 L0.5 12.5Z" fill="#AFB1B3"/></svg>
<svg style="position:absolute;left:191px;top:513px;" width="20" height="19" viewBox="0 0 20 19"><path d="M0.5 1 H7 L8.5 3 H17.5 V14.5 H0.5 Z" fill="#8E979C"/><circle cx="9" cy="9" r="2" fill="#3C3F41"/></svg>
<div class="t" style="left:214px;top:514px;font-size:16px;color:#BBBBBB;letter-spacing:0.25px">utils</div>
<svg style="position:absolute;left:169px;top:539px;" width="11" height="13" viewBox="0 0 11 13"><path d="M0.5 0.5 L10.5 6.5 L0.5 12.5Z" fill="#AFB1B3"/></svg>
<svg style="position:absolute;left:191px;top:537px;" width="20" height="19" viewBox="0 0 20 19"><path d="M0.5 1 H7 L8.5 3 H17.5 V14.5 H0.5 Z" fill="#8E979C"/><circle cx="9" cy="9" r="2" fill="#3C3F41"/></svg>
<div class="t" style="left:214px;top:538px;font-size:16px;color:#BBBBBB;letter-spacing:0.25px">widget</div>
<svg style="position:absolute;left:191px;top:560px;" width="18" height="18" viewBox="0 0 18 18"><circle cx="9" cy="9" r="8.3" fill="#7E8285"/><circle cx="9" cy="9" r="6.2" fill="#3C3F41"/><rect x="4" y="1" width="10" height="16" rx="4" fill="#3D8DB0"/><text x="9" y="13" text-anchor="middle" font-family="Liberation Sans" font-size="11" fill="#1D2B33">C</text></svg>
<div class="t" style="left:214px;top:562px;font-size:16px;color:#BBBBBB;letter-spacing:0.25px">BaseActivity</div>
<svg style="position:absolute;left:191px;top:584px;" width="18" height="18" viewBox="0 0 18 18"><circle cx="9" cy="9" r="8.5" fill="#3D8DB0"/><text x="9" y="13" text-anchor="middle" font-family="Liberation Sans" font-size="11" fill="#1D2B33">C</text></svg>
<div class="t" style="left:214px;top:586px;font-size:16px;color:#BBBBBB;letter-spacing:0.25px">MainActivity</div>
<svg style="position:absolute;left:191px;top:608px;" width="18" height="18" viewBox="0 0 18 18"><circle cx="9" cy="9" r="8.5" fill="#3D8DB0"/><text x="9" y="13" text-anchor="middle" font-family="Liberation Sans" font-size="11" fill="#1D2B33">C</text></svg>
<div class="t" style="left:214px;top:610px;font-size:16px;color:#BBBBBB;letter-spacing:0.25px">MaterialActivity</div>
<svg style="position:absolute;left:123px;top:635px;" width="11" height="13" viewBox="0 0 11 13"><path d="M0.5 0.5 L10.5 6.5 L0.5 12.5Z" fill="#AFB1B3"/></svg>
<svg style="position:absolute;left:145px;top:633px;" width="20" height="19" viewBox="0 0 20 19"><path d="M0.5 1 H7 L8.5 3 H17.5 V14.5 H0.5 Z" fill="#8E979C"/><rect x="10" y="8" width="8" height="9" fill="#3C3F41"/><path d="M11 9.5 h6 M11 12 h6 M11 14.5 h6 M11 17 h6" stroke="#E0A526" stroke-width="1.3"/></svg>
<div class="t" style="left:168px;top:634px;font-size:16px;color:#BBBBBB;letter-spacing:0.25px">res</div>
<svg style="position:absolute;left:145px;top:656px;" width="19" height="19" viewBox="0 0 19 19"><path d="M3 0.5 H11 L14 3 V8 H3Z" fill="none" stroke="#8C8F91" stroke-width="1.2"/><rect x="1" y="6" width="16" height="9" fill="#E9A43B"/><path d="M7 8 L4.5 10.5 L7 13 M11 8 L13.5 10.5 L11 13" stroke="#3C3F41" stroke-width="1.2" fill="none"/><path d="M6 19 a6 5 0 0 1 12 0 Z" fill="#A4C639"/></svg>
<div class="t" style="left:168px;top:658px;font-size:16px;color:#BBBBBB;letter-spacing:0.25px">AndroidManifest.xml</div>
<svg style="position:absolute;left:146px;top:680px;" width="16" height="18" viewBox="0 0 16 18"><path d="M4 0.5 H13.5 V17.5 H1.5 V4 Z" fill="#8E979C"/><rect x="3" y="8" width="10" height="8" fill="#3A9BD6"/><path d="M3 16 L7 11 L10 14 L13 12 V16Z" fill="#62B543"/></svg>
<div class="t" style="left:168px;top:682px;font-size:16px;color:#BBBBBB;letter-spacing:0.25px">go_back-web.png</div>
<svg style="position:absolute;left:100px;top:707px;" width="11" height="13" viewBox="0 0 11 13"><path d="M0.5 0.5 L10.5 6.5 L0.5 12.5Z" fill="#AFB1B3"/></svg>
<svg style="position:absolute;left:122px;top:705px;" width="20" height="19" viewBox="0 0 20 19"><path d="M0.5 1 H7 L8.5 3 H17.5 V14.5 H0.5 Z" fill="#8E979C"/></svg>
<div class="t" style="left:145px;top:706px;font-size:16px;color:#BBBBBB;letter-spacing:0.25px">test</div>
<svg style="position:absolute;left:100px;top:728px;" width="16" height="18" viewBox="0 0 16 18"><path d="M4 0.5 H13.5 V17.5 H1.5 V4 Z" fill="#8E979C"/><path d="M4 4 H5 V1 M4 0.5 L1.5 4" stroke="#3C3F41" stroke-width="1" fill="none"/><path d="M4 8 h7 M4 10.5 h7 M4 13 h7" stroke="#3C3F41" stroke-width="1.2"/></svg>
<div class="t" style="left:122px;top:730px;font-size:16px;color:#BBBBBB;letter-spacing:0.25px">.gitignore</div>
<svg style="position:absolute;left:99px;top:753px;" width="20" height="19" viewBox="0 0 20 19"><path d="M0.5 1 H7 L8.5 3 H17.5 V14.5 H0.5 Z" fill="#8E979C"/><circle cx="14.5" cy="13" r="3.6" fill="#3C3F41"/><circle cx="14.5" cy="13" r="2.6" fill="#62B543"/></svg>
<div class="t" style="left:122px;top:754px;font-size:16px;color:#BBBBBB;letter-spacing:0.25px">app.iml</div>
<svg style="position:absolute;left:98px;top:776px;" width="19" height="19" viewBox="0 0 19 19"><path d="M15.5 5 A7 7 0 1 0 16 13" stroke="#8CC34A" stroke-width="2.6" fill="none"/><path d="M9.5 2.3 A7 7 0 0 1 16 6.5" stroke="#2FAE58" stroke-width="2.6" fill="none"/><circle cx="9.5" cy="9.5" r="3" fill="#2FAE58"/></svg>
<div class="t" style="left:122px;top:778px;font-size:16px;color:#BBBBBB;letter-spacing:0.25px">build.gradle</div>
<svg style="position:absolute;left:100px;top:800px;" width="16" height="18" viewBox="0 0 16 18"><path d="M4 0.5 H13.5 V17.5 H1.5 V4 Z" fill="#8E979C"/><path d="M4 4 H5 V1 M4 0.5 L1.5 4" stroke="#3C3F41" stroke-width="1" fill="none"/><path d="M4 8 h7 M4 10.5 h7 M4 13 h7" stroke="#3C3F41" stroke-width="1.2"/></svg>
<div class="t" style="left:122px;top:802px;font-size:16px;color:#BBBBBB;letter-spacing:0.25px">proguard-rules.pro</div>
<svg style="position:absolute;left:54px;top:827px;" width="11" height="13" viewBox="0 0 11 13"><path d="M0.5 0.5 L10.5 6.5 L0.5 12.5Z" fill="#AFB1B3"/></svg>
<svg style="position:absolute;left:76px;top:825px;" width="20" height="19" viewBox="0 0 20 19"><path d="M0.5 1 H7 L8.5 3 H17.5 V14.5 H0.5 Z" fill="#8E979C"/></svg>
<div class="t" style="left:99px;top:826px;font-size:16px;color:#BBBBBB;letter-spacing:0.25px">gradle</div>
<svg style="position:absolute;left:77px;top:848px;" width="16" height="18" viewBox="0 0 16 18"><path d="M4 0.5 H13.5 V17.5 H1.5 V4 Z" fill="#8E979C"/><path d="M4 4 H5 V1 M4 0.5 L1.5 4" stroke="#3C3F41" stroke-width="1" fill="none"/><path d="M4 8 h7 M4 10.5 h7 M4 13 h7" stroke="#3C3F41" stroke-width="1.2"/></svg>
<div class="t" style="left:99px;top:850px;font-size:16px;color:#BBBBBB;letter-spacing:0.25px">.gitignore</div>
<svg style="position:absolute;left:75px;top:872px;" width="19" height="19" viewBox="0 0 19 19"><path d="M15.5 5 A7 7 0 1 0 16 13" stroke="#8CC34A" stroke-width="2.6" fill="none"/><path d="M9.5 2.3 A7 7 0 0 1 16 6.5" stroke="#2FAE58" stroke-width="2.6" fill="none"/><circle cx="9.5" cy="9.5" r="3" fill="#2FAE58"/></svg>
<div class="t" style="left:99px;top:874px;font-size:16px;color:#BBBBBB;letter-spacing:0.25px">build.gradle</div>
<svg style="position:absolute;left:77px;top:896px;" width="18" height="18" viewBox="0 0 18 18"><path d="M4 0.5 H13.5 V17.5 H1.5 V4 Z" fill="#8E979C"/><rect x="6" y="12" width="2.5" height="6" fill="#E46A2E"/><rect x="10" y="9" width="2.5" height="9" fill="#F0A732"/><rect x="14" y="6" width="2.5" height="12" fill="#62B543"/></svg>
<div class="t" style="left:99px;top:898px;font-size:16px;color:#BBBBBB;letter-spacing:0.25px">gradle.properties</div>
<svg style="position:absolute;left:77px;top:920px;" width="16" height="18" viewBox="0 0 16 18"><path d="M4 0.5 H13.5 V17.5 H1.5 V4 Z" fill="#8E979C"/><path d="M4 4 H5 V1 M4 0.5 L1.5 4" stroke="#3C3F41" stroke-width="1" fill="none"/><path d="M4 8 h7 M4 10.5 h7 M4 13 h7" stroke="#3C3F41" stroke-width="1.2"/></svg>
<div class="t" style="left:99px;top:922px;font-size:16px;color:#BBBBBB;letter-spacing:0.25px">gradlew</div>
<svg style="position:absolute;left:77px;top:944px;" width="16" height="18" viewBox="0 0 16 18"><path d="M4 0.5 H13.5 V17.5 H1.5 V4 Z" fill="#8E979C"/><path d="M4 4 H5 V1 M4 0.5 L1.5 4" stroke="#3C3F41" stroke-width="1" fill="none"/><path d="M4 8 h7 M4 10.5 h7 M4 13 h7" stroke="#3C3F41" stroke-width="1.2"/></svg>
<div class="t" style="left:99px;top:946px;font-size:16px;color:#BBBBBB;letter-spacing:0.25px">gradlew.bat</div>
<svg style="position:absolute;left:77px;top:968px;" width="18" height="18" viewBox="0 0 18 18"><path d="M4 0.5 H13.5 V17.5 H1.5 V4 Z" fill="#8E979C"/><rect x="8" y="12" width="9" height="6" fill="#3A3A3A"/></svg>
<div class="t" style="left:99px;top:970px;font-size:16px;color:#BBBBBB;letter-spacing:0.25px">HiAICodeDemo.iml</div>
<div style="left:201px;top:125px;width:290px;height:24px;overflow:hidden">
<div class="t" style="left:0px;top:5px;font-size:16px;color:#8A8D90;letter-spacing:0.5px">D:\project\android_project\VideoPortra</div>
</div>
<div style="left:192px;top:437px;width:212px;height:28px;background:transparent;border:3px solid #E8141B"></div>
<div style="left:491px;top:94px;width:1px;height:891px;background:#2B2B2B;"></div>
<div style="left:473px;top:407px;width:18px;height:2px;background:#B84A48;"></div>
<div style="left:492px;top:94px;width:1400px;height:28px;background:#3C3F41;"></div>
<div style="left:492px;top:94px;width:233px;height:25px;background:#4E5254;"></div>
<div style="left:724px;top:94px;width:1px;height:25px;background:#333;"></div>
<div style="left:492px;top:119px;width:233px;height:3px;background:#4A8299;"></div>
<div style="left:725px;top:120px;width:1167px;height:1px;background:#4B4D4F;"></div>
<svg style="position:absolute;left:501px;top:99px;" width="18" height="18" viewBox="0 0 18 18"><circle cx="9" cy="9" r="8.5" fill="#3D8DB0"/><text x="9" y="13" text-anchor="middle" font-family="Liberation Sans" font-size="11" fill="#1D2B33">C</text></svg>
<div class="t" style="left:523px;top:102px;font-size:16px;color:#BBBBBB;">ImageSuperActivity.java</div>
<svg style="position:absolute;left:523px;top:116px;" width="175" height="3" viewBox="0 0 175 3"><path d="M0 2 L2 0 L4 2 L6 0 L8 2 L10 0 L12 2 L14 0 L16 2 L18 0 L20 2 L22 0 L24 2 L26 0 L28 2 L30 0 L32 2 L34 0 L36 2 L38 0 L40 2 L42 0 L44 2 L46 0 L48 2 L50 0 L52 2 L54 0 L56 2 L58 0 L60 2 L62 0 L64 2 L66 0 L68 2 L70 0 L72 2 L74 0 L76 2 L78 0 L80 2 L82 0 L84 2 L86 0 L88 2 L90 0 L92 2 L94 0 L96 2 L98 0 L100 2 L102 0 L104 2 L106 0 L108 2 L110 0 L112 2 L114 0 L116 2 L118 0 L120 2 L122 0 L124 2 L126 0 L128 2 L130 0 L132 2 L134 0 L136 2 L138 0 L140 2 L142 0 L144 2 L146 0 L148 2 L150 0 L152 2 L154 0 L156 2 L158 0 L160 2 L162 0 L164 2 L166 0 L168 2 L170 0 L172 2 L174 0 L176 2" stroke="#BC3F3C" stroke-width="1" fill="none"/></svg>
<svg style="position:absolute;left:705px;top:103px;" width="11" height="11" viewBox="0 0 11 11"><path d="M0.5 0.5 L10.5 10.5 M10.5 0.5 L0.5 10.5" stroke="#7D8184" stroke-width="1.2"/></svg>
<div style="left:492px;top:122px;width:81px;height:835px;background:#313335;"></div>
<div style="left:573px;top:122px;width:1319px;height:835px;background:#2B2B2B;"></div>
<div style="left:572px;top:122px;width:1px;height:835px;background:#555555;"></div>
<div style="left:1382px;top:122px;width:1px;height:835px;background:#464646;"></div>
<div style="left:638px;top:597px;width:63px;height:24px;background:#4D4A32;"></div>
<div style="left:646px;top:748px;width:64px;height:24px;background:#4D4A32;"></div>
<div style="left:492px;top:122px;width:1400px;height:835px;overflow:hidden">
<div class="m" style="left:0px;top:9px;width:30px;text-align:right;font-size:14px;letter-spacing:-0.6px;color:#606366">36</div>
<div class="m" style="left:89.60000000000002px;top:9px;font-size:13.4px"><span style="color:#A9B7C6;">    </span><span style="color:#CC7832;">protected void </span><span style="color:#FFC66D;">init</span><span style="color:#A9B7C6;">() {</span></div>
<div class="m" style="left:0px;top:34px;width:30px;text-align:right;font-size:14px;letter-spacing:-0.6px;color:#606366">37</div>
<div class="m" style="left:89.60000000000002px;top:34px;font-size:13.4px"><span style="color:#A9B7C6;">        initView()</span><span style="color:#CC7832;">;</span></div>
<div class="m" style="left:0px;top:59px;width:30px;text-align:right;font-size:14px;letter-spacing:-0.6px;color:#606366">38</div>
<div class="m" style="left:89.60000000000002px;top:59px;font-size:13.4px"><span style="color:#A9B7C6;">        initHiAI()</span><span style="color:#CC7832;">;</span></div>
<div class="m" style="left:0px;top:84px;width:30px;text-align:right;font-size:14px;letter-spacing:-0.6px;color:#606366">39</div>
<div class="m" style="left:0px;top:109px;width:30px;text-align:right;font-size:14px;letter-spacing:-0.6px;color:#606366">40</div>
<div class="m" style="left:89.60000000000002px;top:109px;font-size:13.4px"><span style="color:#A9B7C6;">    }</span></div>
<div class="m" style="left:0px;top:134px;width:30px;text-align:right;font-size:14px;letter-spacing:-0.6px;color:#606366">41</div>
<div class="m" style="left:0px;top:159px;width:30px;text-align:right;font-size:14px;letter-spacing:-0.6px;color:#606366">42</div>
<div class="m" style="left:89.60000000000002px;top:159px;font-size:13.4px"><span style="color:#629755;">    /**</span></div>
<div class="m" style="left:0px;top:184px;width:30px;text-align:right;font-size:14px;letter-spacing:-0.6px;color:#606366">43</div>
<div class="m" style="left:89.60000000000002px;top:184px;font-size:13.4px"><span style="color:#629755;">     * init HiAI interface</span></div>
<div class="m" style="left:0px;top:209px;width:30px;text-align:right;font-size:14px;letter-spacing:-0.6px;color:#606366">44</div>
<div class="m" style="left:89.60000000000002px;top:209px;font-size:13.4px"><span style="color:#629755;">     */</span></div>
<div class="m" style="left:0px;top:234px;width:30px;text-align:right;font-size:14px;letter-spacing:-0.6px;color:#606366">45</div>
<div class="m" style="left:89.60000000000002px;top:234px;font-size:13.4px"><span style="color:#A9B7C6;">    </span><span style="color:#CC7832;">private void </span><span style="color:#FFC66D;">initHiAI</span><span style="color:#A9B7C6;">() {</span></div>
<div class="m" style="left:0px;top:259px;width:30px;text-align:right;font-size:14px;letter-spacing:-0.6px;color:#606366">46</div>
<div class="m" style="left:0px;top:284px;width:30px;text-align:right;font-size:14px;letter-spacing:-0.6px;color:#606366">47</div>
<div class="m" style="left:0px;top:309px;width:30px;text-align:right;font-size:14px;letter-spacing:-0.6px;color:#606366">48</div>
<div class="m" style="left:0px;top:334px;width:30px;text-align:right;font-size:14px;letter-spacing:-0.6px;color:#606366">49</div>
<div class="m" style="left:0px;top:359px;width:30px;text-align:right;font-size:14px;letter-spacing:-0.6px;color:#606366">50</div>
<div class="m" style="left:89.60000000000002px;top:359px;font-size:13.4px"><span style="color:#A9B7C6;">    }</span></div>
<div class="m" style="left:0px;top:384px;width:30px;text-align:right;font-size:14px;letter-spacing:-0.6px;color:#606366">51</div>
<div class="m" style="left:0px;top:409px;width:30px;text-align:right;font-size:14px;letter-spacing:-0.6px;color:#606366">52</div>
<div class="m" style="left:89.60000000000002px;top:409px;font-size:13.4px"><span style="color:#629755;">    /**</span></div>
<div class="m" style="left:0px;top:434px;width:30px;text-align:right;font-size:14px;letter-spacing:-0.6px;color:#606366">53</div>
<div class="m" style="left:89.60000000000002px;top:434px;font-size:13.4px"><span style="color:#629755;">     * Capability Interfaces</span></div>
<div class="m" style="left:0px;top:459px;width:30px;text-align:right;font-size:14px;letter-spacing:-0.6px;color:#606366">54</div>
<div class="m" style="left:89.60000000000002px;top:459px;font-size:13.4px"><span style="color:#629755;">     *</span></div>
<div class="m" style="left:0px;top:484px;width:30px;text-align:right;font-size:14px;letter-spacing:-0.6px;color:#606366">55</div>
<div class="m" style="left:89.60000000000002px;top:484px;font-size:13.4px"><span style="color:#629755;">     * </span><span style="color:#629755;font-weight:bold;text-decoration:underline">@return</span></div>
<div class="m" style="left:0px;top:509px;width:30px;text-align:right;font-size:14px;letter-spacing:-0.6px;color:#606366">56</div>
<div class="m" style="left:89.60000000000002px;top:509px;font-size:13.4px"><span style="color:#629755;">     */</span></div>
<div class="m" style="left:0px;top:534px;width:30px;text-align:right;font-size:14px;letter-spacing:-0.6px;color:#606366">57</div>
<div class="m" style="left:89.60000000000002px;top:534px;font-size:13.4px"><span style="color:#A9B7C6;">    </span><span style="color:#CC7832;">private void </span><span style="color:#FFC66D;">setHiAi</span><span style="color:#A9B7C6;">() {</span></div>
<div class="m" style="left:0px;top:559px;width:30px;text-align:right;font-size:14px;letter-spacing:-0.6px;color:#606366">58</div>
<div class="m" style="left:0px;top:584px;width:30px;text-align:right;font-size:14px;letter-spacing:-0.6px;color:#606366">59</div>
<div class="m" style="left:0px;top:609px;width:30px;text-align:right;font-size:14px;letter-spacing:-0.6px;color:#606366">60</div>
<div class="m" style="left:0px;top:634px;width:30px;text-align:right;font-size:14px;letter-spacing:-0.6px;color:#606366">61</div>
<div class="m" style="left:89.60000000000002px;top:634px;font-size:13.4px"><span style="color:#A9B7C6;">        </span><span style="color:#CC7832;">this</span><span style="color:#A9B7C6;">.</span><span style="color:#9876AA;">bmp</span><span style="color:#A9B7C6;"> = </span><span style="color:#A9B7C6;text-decoration:underline wavy #808080;text-decoration-thickness:1px;text-underline-offset:3px">bmp</span><span style="color:#CC7832;">;</span></div>
<div class="m" style="left:0px;top:659px;width:30px;text-align:right;font-size:14px;letter-spacing:-0.6px;color:#606366">62</div>
<div class="m" style="left:89.60000000000002px;top:659px;font-size:13.4px"><span style="color:#A9B7C6;">        </span><span style="color:#9876AA;">handler</span><span style="color:#A9B7C6;">.sendEmptyMessage(</span><span style="color:#9876AA;">SUPERRESOLUTION_RESULT</span><span style="color:#A9B7C6;">)</span><span style="color:#CC7832;">;</span></div>
<div class="m" style="left:0px;top:684px;width:30px;text-align:right;font-size:14px;letter-spacing:-0.6px;color:#606366">63</div>
<div class="m" style="left:89.60000000000002px;top:684px;font-size:13.4px"><span style="color:#A9B7C6;">    }</span></div>
<div class="m" style="left:0px;top:709px;width:30px;text-align:right;font-size:14px;letter-spacing:-0.6px;color:#606366">64</div>
<div class="m" style="left:0px;top:734px;width:30px;text-align:right;font-size:14px;letter-spacing:-0.6px;color:#606366">65</div>
<div class="m" style="left:89.60000000000002px;top:734px;font-size:13.4px"><span style="color:#629755;">    /**</span></div>
<div class="m" style="left:0px;top:759px;width:30px;text-align:right;font-size:14px;letter-spacing:-0.6px;color:#606366">66</div>
<div class="m" style="left:89.60000000000002px;top:759px;font-size:13.4px"><span style="color:#629755;">     * Release</span></div>
<div class="m" style="left:0px;top:784px;width:30px;text-align:right;font-size:14px;letter-spacing:-0.6px;color:#606366">67</div>
<div class="m" style="left:89.60000000000002px;top:784px;font-size:13.4px"><span style="color:#629755;">     */</span></div>
<div class="m" style="left:0px;top:809px;width:30px;text-align:right;font-size:14px;letter-spacing:-0.6px;color:#606366">68</div>
<div class="m" style="left:89.60000000000002px;top:809px;font-size:13.4px"><span style="color:#A9B7C6;">    </span><span style="color:#BBB529;">@Override</span></div>
</div>
<svg style="position:absolute;left:566px;top:130px;" width="14" height="16" viewBox="0 0 14 16"><path d="M0.5 0.5 H12.5 V9 L6.5 14 L0.5 9Z" fill="#313335" stroke="#6E6E6E"/><path d="M3.5 5.5 H9.5" stroke="#6E6E6E"/></svg>
<svg style="position:absolute;left:566px;top:280px;" width="14" height="16" viewBox="0 0 14 16"><path d="M0.5 0.5 H12.5 V9 L6.5 14 L0.5 9Z" fill="#313335" stroke="#6E6E6E"/><path d="M3.5 5.5 H9.5" stroke="#6E6E6E"/></svg>
<svg style="position:absolute;left:566px;top:355px;" width="14" height="16" viewBox="0 0 14 16"><path d="M0.5 0.5 H12.5 V9 L6.5 14 L0.5 9Z" fill="#313335" stroke="#6E6E6E"/><path d="M3.5 5.5 H9.5" stroke="#6E6E6E"/></svg>
<svg style="position:absolute;left:566px;top:530px;" width="14" height="16" viewBox="0 0 14 16"><path d="M0.5 0.5 H12.5 V9 L6.5 14 L0.5 9Z" fill="#313335" stroke="#6E6E6E"/><path d="M3.5 5.5 H9.5" stroke="#6E6E6E"/></svg>
<svg style="position:absolute;left:566px;top:655px;" width="14" height="16" viewBox="0 0 14 16"><path d="M0.5 0.5 H12.5 V9 L6.5 14 L0.5 9Z" fill="#313335" stroke="#6E6E6E"/><path d="M3.5 5.5 H9.5" stroke="#6E6E6E"/></svg>
<svg style="position:absolute;left:566px;top:855px;" width="14" height="16" viewBox="0 0 14 16"><path d="M0.5 0.5 H12.5 V9 L6.5 14 L0.5 9Z" fill="#313335" stroke="#6E6E6E"/><path d="M3.5 5.5 H9.5" stroke="#6E6E6E"/></svg>
<svg style="position:absolute;left:566px;top:227px;" width="14" height="16" viewBox="0 0 14 16"><path d="M0.5 15 H12.5 V6 L6.5 1 L0.5 6Z" fill="#313335" stroke="#6E6E6E"/><path d="M3.5 9.5 H9.5" stroke="#6E6E6E"/></svg>
<svg style="position:absolute;left:566px;top:327px;" width="14" height="16" viewBox="0 0 14 16"><path d="M0.5 15 H12.5 V6 L6.5 1 L0.5 6Z" fill="#313335" stroke="#6E6E6E"/><path d="M3.5 9.5 H9.5" stroke="#6E6E6E"/></svg>
<svg style="position:absolute;left:566px;top:477px;" width="14" height="16" viewBox="0 0 14 16"><path d="M0.5 15 H12.5 V6 L6.5 1 L0.5 6Z" fill="#313335" stroke="#6E6E6E"/><path d="M3.5 9.5 H9.5" stroke="#6E6E6E"/></svg>
<svg style="position:absolute;left:566px;top:627px;" width="14" height="16" viewBox="0 0 14 16"><path d="M0.5 15 H12.5 V6 L6.5 1 L0.5 6Z" fill="#313335" stroke="#6E6E6E"/><path d="M3.5 9.5 H9.5" stroke="#6E6E6E"/></svg>
<svg style="position:absolute;left:566px;top:802px;" width="14" height="16" viewBox="0 0 14 16"><path d="M0.5 15 H12.5 V6 L6.5 1 L0.5 6Z" fill="#313335" stroke="#6E6E6E"/><path d="M3.5 9.5 H9.5" stroke="#6E6E6E"/></svg>
<svg style="position:absolute;left:566px;top:902px;" width="14" height="16" viewBox="0 0 14 16"><path d="M0.5 15 H12.5 V6 L6.5 1 L0.5 6Z" fill="#313335" stroke="#6E6E6E"/><path d="M3.5 9.5 H9.5" stroke="#6E6E6E"/></svg>
<div style="left:616px;top:147px;width:1px;height:75px;background:#3B3B3B;"></div>
<div style="left:616px;top:672px;width:1px;height:125px;background:#3B3B3B;"></div>
<svg style="position:absolute;left:529px;top:129px;" width="16" height="16" viewBox="0 0 16 16"><circle cx="7.5" cy="7.5" r="6.5" fill="#4FAE5B"/><path d="M5.5 4 H9.5 M7.5 4 V11 M5.5 11 H9.5" stroke="#2E3B2E" stroke-width="1.2"/></svg>
<svg style="position:absolute;left:541px;top:124px;" width="8" height="21" viewBox="0 0 8 21"><path d="M4 3 V20" stroke="#D25252" stroke-width="2"/><path d="M0 6 L4 0 L8 6Z" fill="#D25252"/></svg>
<svg style="position:absolute;left:531px;top:954px;" width="11" height="3" viewBox="0 0 11 3"><path d="M0 3 A5 4 0 0 1 10 3Z" fill="#5DADE2"/></svg>
<svg style="position:absolute;left:541px;top:949px;" width="9" height="8" viewBox="0 0 9 8"><path d="M4.5 3 V8" stroke="#D25252" stroke-width="2"/><path d="M0.5 5 L4.5 0 L8.5 5Z" fill="#D25252"/></svg>
<svg style="position:absolute;left:566px;top:954px;" width="14" height="3" viewBox="0 0 14 3"><path d="M0.5 3 V0.5 H12.5 V3" fill="#313335" stroke="#6E6E6E"/></svg>
<svg style="position:absolute;left:1876px;top:124px;" width="14" height="14" viewBox="0 0 14 14"><circle cx="7" cy="7" r="6.5" fill="#B02A2A"/><path d="M7 3 V8.5" stroke="#fff" stroke-width="2"/><circle cx="7" cy="10.8" r="1.1" fill="#fff"/></svg>
<div style="left:1874px;top:155px;width:18px;height:3px;background:#B52B2B;"></div>
<div style="left:1874px;top:167px;width:18px;height:3px;background:#1E7B1E;"></div>
<div style="left:1874px;top:180px;width:18px;height:3px;background:#1E7B1E;"></div>
<div style="left:1874px;top:211px;width:18px;height:3px;background:#BF911C;"></div>
<div style="left:1880px;top:237px;width:11px;height:205px;background:#6B6B6B;border-radius:3px"></div>
<div style="left:1874px;top:354px;width:6px;height:3px;background:#BF911C;"></div>
<div style="left:1880px;top:354px;width:11px;height:3px;background:#8F8669;"></div>
<div style="left:1874px;top:391px;width:6px;height:3px;background:#BF911C;"></div>
<div style="left:1880px;top:391px;width:11px;height:3px;background:#8F8669;"></div>
<div style="left:1874px;top:515px;width:18px;height:3px;background:#BF911C;"></div>
<div style="left:1874px;top:714px;width:18px;height:3px;background:#BF911C;"></div>
<div style="left:1874px;top:857px;width:18px;height:43px;background:#BF911C;"></div>
<div style="left:492px;top:957px;width:1400px;height:1px;background:#3A3A3A;"></div>
<div style="left:492px;top:958px;width:1400px;height:27px;background:#333435;"></div>
<div class="t" style="left:582px;top:964px;font-size:16px;color:#BBBBBB;letter-spacing:0.3px">ImageSuperActivity</div>
<div style="left:0px;top:984px;width:1914px;height:2px;background:#4C4E50;"></div>
<div style="left:1892px;top:94px;width:2px;height:891px;background:#555758;"></div>
<div style="left:1894px;top:94px;width:20px;height:891px;background:#3C3F41;"></div>
<svg style="position:absolute;left:1895px;top:104px;" width="19" height="19" viewBox="0 0 19 19"><path d="M15.5 5 A7 7 0 1 0 16 13" stroke="#8CC34A" stroke-width="2.6" fill="none"/><path d="M9.5 2.3 A7 7 0 0 1 16 6.5" stroke="#2FAE58" stroke-width="2.6" fill="none"/><circle cx="9.5" cy="9.5" r="3" fill="#2FAE58"/></svg>
<div class="t" style="left:1914px;top:125px;font-size:15px;color:#BBBBBB;transform-origin:0 0;transform:rotate(90deg)">Gradle</div>
<svg style="position:absolute;left:1899px;top:817px;" width="12" height="17" viewBox="0 0 12 17"><rect x="1" y="1" width="10" height="15" rx="1" fill="none" stroke="#AFB1B3" stroke-width="1.6"/><rect x="1" y="12" width="10" height="4" fill="#AFB1B3"/><rect x="4" y="13.5" width="4" height="1" fill="#3C3F41"/></svg>
<div class="t" style="left:1913.5px;top:836px;font-size:15px;color:#BBBBBB;transform-origin:0 0;transform:rotate(90deg)">Device File Explorer</div>
<div style="left:0px;top:986px;width:1914px;height:27px;background:#3C3F41;"></div>
<div style="left:0px;top:1013px;width:1914px;height:1px;background:#4A4745;"></div>
<svg style="position:absolute;left:40px;top:989px;" width="26" height="22" viewBox="0 0 26 22"><path d="M6 19 a5 5 0 0 1 1 -9.8 a7 7 0 0 1 13 1 a4.5 4.5 0 0 1 0 8.8Z" fill="none" stroke="#6E6E6E" stroke-width="1.3"/><path d="M13 19 V10 M9 13.5 L13 9 L17 13.5" stroke="#FFFFFF" stroke-width="2.2" fill="none"/></svg>
<div class="t" style="left:70px;top:993px;font-size:14.6px;color:#BBBBBB;">DevEco Output</div>
<svg style="position:absolute;left:200px;top:990px;" width="18" height="20" viewBox="0 0 18 20"><path d="M4 0 V16" stroke="#3DAA4A" stroke-width="2"/><path d="M0 12 L4 18 L8 12Z" fill="#3DAA4A"/><text x="9" y="7" font-size="6.5" fill="#BBB" font-family="Liberation Mono">01</text><text x="9" y="14" font-size="6.5" fill="#BBB" font-family="Liberation Mono">10</text></svg>
<div class="t" style="left:220px;top:993px;font-size:14.6px;color:#BBBBBB;">Build</div>
<svg style="position:absolute;left:279px;top:991px;" width="18" height="17" viewBox="0 0 18 17"><rect x="0.5" y="0.5" width="17" height="16" fill="#111" stroke="#8C8F91"/><path d="M3 6 L6 8.5 L3 11 M7 12 H11" stroke="#fff" stroke-width="1.2" fill="none"/></svg>
<div class="t" style="left:299px;top:993px;font-size:14.6px;color:#BBBBBB;">Terminal</div>
<svg style="position:absolute;left:384px;top:993px;" width="16" height="14" viewBox="0 0 16 14"><path d="M0 2 H15 M0 7 H10 M0 12 H13" stroke="#BBBBBB" stroke-width="2.2"/></svg>
<div class="t" style="left:404px;top:993px;font-size:14.6px;color:#BBBBBB;"><u>6</u>: Logcat</div>
<svg style="position:absolute;left:488px;top:988px;" width="19" height="22" viewBox="0 0 19 22"><circle cx="4" cy="4.5" r="4" fill="#fff"/><path d="M2 3.5 h4 M2 5.5 h4" stroke="#555"/><circle cx="11" cy="11" r="5" fill="#8C8F91"/><circle cx="11" cy="13" r="4" fill="#F0A732"/><path d="M5 22 a6 4 0 0 1 12 0Z" fill="#3A9BD6"/></svg>
<div class="t" style="left:509px;top:993px;font-size:14.6px;color:#BBBBBB;">TODO</div>
<svg style="position:absolute;left:1787px;top:989px;" width="22" height="22" viewBox="0 0 22 22"><circle cx="10" cy="10" r="9" fill="#E2A739"/><path d="M12 17 L19 21 L17 13Z" fill="#E2A739"/><text x="10" y="14.5" text-anchor="middle" font-size="12" font-weight="bold" font-family="Liberation Sans" fill="#333">2</text></svg>
<div class="t" style="left:1812px;top:993px;font-size:14.6px;color:#BBBBBB;">Event Log</div>
<div style="left:0px;top:1013px;width:1914px;height:25px;background:#3C3F41;"></div>
<div style="left:9px;top:1018px;width:18px;height:15px;background:#5A5C5E;border:1px solid #A0A0A0;box-shadow:inset 0 0 0 1px #6E7072"></div>
<div style="left:9px;top:1034px;width:18px;height:2px;background:#8C8F91;"></div>
<div class="t" style="left:36px;top:1020px;font-size:16px;color:#BBBBBB;">Gradle build finished in 4 s 265 ms (a minute ago)</div>
<div class="t" style="left:1494px;top:1020px;font-size:16px;color:#BBBBBB;">25:14</div>
<div class="t" style="left:1548px;top:1020px;font-size:16px;color:#BBBBBB;letter-spacing:-1.1px">CRLF</div>
<svg style="position:absolute;left:1587px;top:1022px;" width="8" height="14" viewBox="0 0 8 14"><path d="M0 5 L3.5 0.5 L7 5Z M0 9 L3.5 13.5 L7 9Z" fill="#BBBBBB"/></svg>
<div class="t" style="left:1605px;top:1020px;font-size:16px;color:#BBBBBB;letter-spacing:-0.7px">UTF-8</div>
<svg style="position:absolute;left:1649px;top:1022px;" width="8" height="14" viewBox="0 0 8 14"><path d="M0 5 L3.5 0.5 L7 5Z M0 9 L3.5 13.5 L7 9Z" fill="#BBBBBB"/></svg>
<div class="t" style="left:1667px;top:1020px;font-size:16px;color:#8A8D90;letter-spacing:0.5px">Context: &lt;no context&gt;</div>
<svg style="position:absolute;left:1864px;top:1020px;" width="13" height="14" viewBox="0 0 13 14"><path d="M3 6 V3 a3 3 0 0 1 6 0" stroke="#AFB1B3" stroke-width="1.4" fill="none"/><rect x="4" y="6.5" width="8" height="6.5" fill="#AFB1B3"/></svg>
<svg style="position:absolute;left:1894px;top:1018px;" width="20" height="20" viewBox="0 0 20 20"><circle cx="10" cy="8" r="6" fill="none" stroke="#8C8F91" stroke-width="1.8"/><rect x="5" y="3" width="10" height="4" fill="#8C8F91"/><path d="M3 20 V16 a7 5 0 0 1 14 0 V20" fill="none" stroke="#8C8F91" stroke-width="1.8"/></svg>
</body></html>
